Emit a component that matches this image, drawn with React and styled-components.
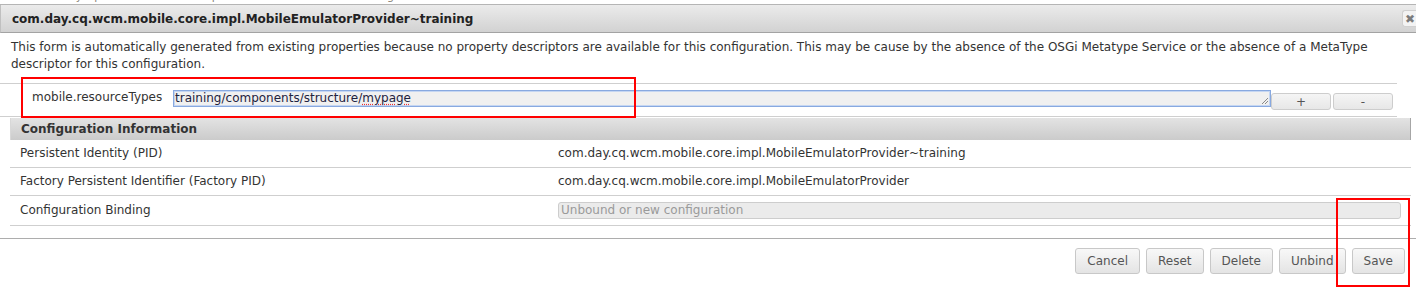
import React from "react";
import styled, { createGlobalStyle } from "styled-components";

const GlobalStyle = createGlobalStyle`
  html, body { margin: 0; padding: 0; background: #fff; }
  body { font-family: "DejaVu Sans", Verdana, sans-serif; font-size: 12px; color: #333; }
`;

const Page = styled.div`
  position: relative;
  width: 1416px;
  height: 288px;
  overflow: hidden;
  background: #fff;
`;

const BehindStrip = styled.div`
  height: 4px;
  overflow: hidden;
  background: #fff;
  border-bottom: 1px solid #b5b5b5;
  padding-left: 35px;
`;

const BehindText = styled.div`
  margin-top: -9px;
  line-height: 12px;
  font-size: 11px;
  color: #8a8478;
  white-space: nowrap;
`;

const TitleBar = styled.div`
  display: flex;
  align-items: center;
  justify-content: space-between;
  height: 27px;
  padding-left: 11px;
  background: linear-gradient(to bottom, #ebebeb 0%, #d2d2d2 100%);
  border-bottom: 1px solid #a3a3a3;
  border-left: 1px solid #c0c0c0;
`;

const Title = styled.div`
  font-weight: 700;
  color: #222;
  line-height: 15px;
  padding-top: 1px;
  white-space: nowrap;
`;

const CloseButton = styled.div`
  width: 15px;
  height: 17px;
  margin-right: -1px;
  display: flex;
  align-items: center;
  justify-content: center;
  box-sizing: border-box;
  border: 1px solid #d0d0d0;
  border-right: none;
  border-radius: 3px 0 0 3px;
  background: #f3f3f3;
  color: #7c7c7c;
  font-size: 12px;
  line-height: 12px;
`;

const Description = styled.p`
  margin: 0;
  padding: 6px 22px 10px 11px;
  line-height: 17px;
  color: #333;
`;

const FormTable = styled.div`
  width: 1397px;
  border-top: 1px solid #cfcfcf;
  border-bottom: 1px solid #cfcfcf;
`;

const FormRow = styled.div`
  display: flex;
  align-items: flex-start;
  height: 26px;
  padding: 6px 0 0 32px;
`;

const FieldLabel = styled.div`
  width: 141px;
  line-height: 15px;
  color: #333;
  white-space: nowrap;
`;

const TextArea = styled.div`
  position: relative;
  box-sizing: border-box;
  width: 1098px;
  height: 17px;
  padding: 0 1px;
  border: 1px solid #88a9e0;
  box-shadow: inset 0 0 0 1px #c5d6f2;
  background: #f0f0f0;
  color: #1e2340;
  line-height: 14px;
  white-space: nowrap;
`;

const Misspelled = styled.span`
  text-decoration: underline dotted #e33;
  text-underline-offset: 2px;
`;

const Grip = styled.svg`
  position: absolute;
  right: 1px;
  bottom: 1px;
`;

const SmallButton = styled.div`
  box-sizing: border-box;
  width: 60px;
  height: 17px;
  margin-top: 3px;
  margin-left: ${(p) => (p.$first ? "0" : "2px")};
  border: 1px solid #cdcdcd;
  border-radius: 3px;
  background: linear-gradient(to bottom, #f5f5f5, #e7e7e7);
  color: #555;
  text-align: center;
  line-height: 17px;
`;

const InfoTable = styled.div`
  margin: 1px 5px 0 10px;
`;

const InfoHeader = styled.div`
  height: 22px;
  padding: 1px 0 0 10px;
  box-sizing: border-box;
  background: linear-gradient(to bottom, #e3e3e3, #cbcbcb);
  border-right: 1px solid #a6a6a6;
  border-left: 1px solid #d8d8d8;
  font-weight: 700;
  color: #333;
  line-height: 21px;
`;

const InfoRow = styled.div`
  display: grid;
  grid-template-columns: 538px 1fr;
  align-items: center;
  padding: 6px 10px 6px 10px;
  border-bottom: 1px solid #cfcfcf;
  line-height: 15px;
`;

const Cell = styled.div`
  color: #333;
  white-space: nowrap;
`;

const BindingInput = styled.div`
  box-sizing: border-box;
  height: 17px;
  padding: 0 2px;
  border: 1px solid #cdcdcd;
  border-radius: 3px;
  background: #ebebeb;
  color: #9a9a9a;
  line-height: 15px;
  white-space: nowrap;
`;

const Footer = styled.div`
  display: flex;
  justify-content: flex-end;
  gap: 6px;
  margin-top: 12px;
  padding: 9px 11px 0 0;
  border-top: 1px solid #adadad;
`;

const Button = styled.div`
  box-sizing: border-box;
  height: 26px;
  padding: 0 11px;
  border: 1px solid #c8c8c8;
  border-radius: 3px;
  background: linear-gradient(to bottom, #f8f8f8, #e4e4e4);
  color: #555;
  line-height: 24px;
  white-space: nowrap;
`;

const Annotation = styled.div`
  position: absolute;
  left: ${(p) => p.$x}px;
  top: ${(p) => p.$y}px;
  width: ${(p) => p.$w}px;
  height: ${(p) => p.$h}px;
  box-sizing: border-box;
  border: 2px solid #f00;
  pointer-events: none;
`;

const infoRows = [
  ["Persistent Identity (PID)", "com.day.cq.wcm.mobile.core.impl.MobileEmulatorProvider~training"],
  ["Factory Persistent Identifier (Factory PID)", "com.day.cq.wcm.mobile.core.impl.MobileEmulatorProvider"],
];

export default function App() {
  return (
    <Page>
      <GlobalStyle />
      <BehindStrip>
        <BehindText>com.day.cq.wcm.mobile.core.impl.MobileEmulatorProvider configuration</BehindText>
      </BehindStrip>
      <TitleBar>
        <Title>com.day.cq.wcm.mobile.core.impl.MobileEmulatorProvider~training</Title>
        <CloseButton>✖</CloseButton>
      </TitleBar>
      <Description>
        This form is automatically generated from existing properties because no property descriptors are available for
        this configuration. This may be cause by the absence of the OSGi Metatype Service or the absence of a MetaType
        descriptor for this configuration.
      </Description>
      <FormTable>
        <FormRow>
          <FieldLabel>mobile.resourceTypes</FieldLabel>
          <TextArea>
            training/components/structure/<Misspelled>mypage</Misspelled>
            <Grip width="8" height="8" viewBox="0 0 8 8">
              <path d="M7 1 L1 7 M7 4 L4 7" stroke="#8a8a8a" strokeWidth="1" fill="none" />
            </Grip>
          </TextArea>
          <SmallButton $first>+</SmallButton>
          <SmallButton>-</SmallButton>
        </FormRow>
      </FormTable>
      <InfoTable>
        <InfoHeader>Configuration Information</InfoHeader>
        {infoRows.map(([label, value]) => (
          <InfoRow key={label}>
            <Cell>{label}</Cell>
            <Cell>{value}</Cell>
          </InfoRow>
        ))}
        <InfoRow>
          <Cell>Configuration Binding</Cell>
          <BindingInput>Unbound or new configuration</BindingInput>
        </InfoRow>
      </InfoTable>
      <Footer>
        <Button>Cancel</Button>
        <Button>Reset</Button>
        <Button>Delete</Button>
        <Button>Unbind</Button>
        <Button>Save</Button>
      </Footer>
      <Annotation $x={21} $y={77} $w={615} $h={41} />
      <Annotation $x={1336} $y={198} $w={74} $h={89} />
    </Page>
  );
}
